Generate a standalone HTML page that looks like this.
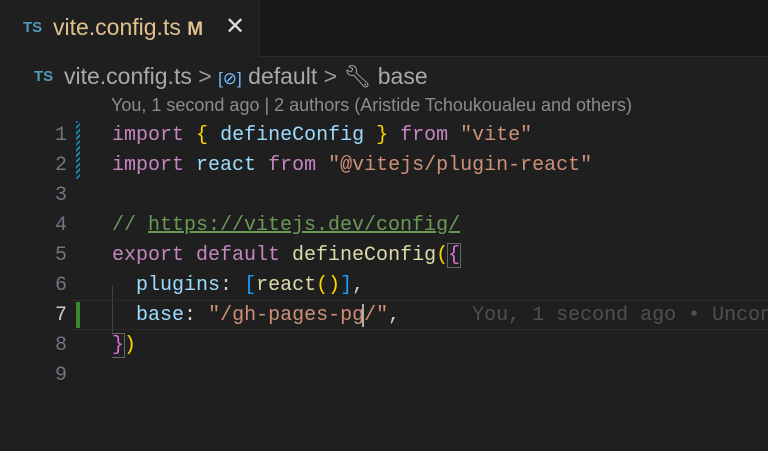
<!DOCTYPE html>
<html><head><meta charset="utf-8"><style>
body{margin:0;width:768px;height:451px;background:#1f1f1f;overflow:hidden;font-family:"Liberation Sans",sans-serif;position:relative}
.tabbar{position:absolute;left:0;top:0;width:768px;height:56px;background:#181818;border-bottom:1px solid #2b2b2b}
.tab{position:absolute;left:0;top:0;width:259px;height:57px;background:#1f1f1f;border-right:1px solid #2b2b2b}
.abs{position:absolute;white-space:pre}
.ts{color:#519aba;font-weight:bold;font-size:15px}
.code{font-family:"Liberation Mono",monospace;font-size:20px;line-height:30px}
.ln{position:absolute;left:30px;width:37px;text-align:right;color:#6e7681;font-family:"Liberation Mono",monospace;font-size:20px;line-height:30px}
.k{color:#c586c0}.v{color:#9cdcfe}.y{color:#ffd700}.s{color:#ce9178}.c{color:#6a9955}.f{color:#dcdcaa}.b{color:#179fff}.w{color:#cccccc}.p{color:#da70d6}
</style></head><body>
<div class="tabbar"></div>
<div class="tab"></div>
<div class="abs ts" style="left:23px;top:19px">TS</div>
<div class="abs" style="left:53px;top:14px;font-size:23px;color:#e2c08d">vite.config.ts <span style="font-weight:bold;font-size:19px">M</span></div>
<div class="abs" style="left:225px;top:12px;font-size:24px;color:#ddd">✕</div>

<div class="abs ts" style="left:34px;top:68px">TS</div>
<div class="abs" style="left:64px;top:63px;font-size:23px;color:#a9a9a9">vite.config.ts <span style="color:#999">&gt;</span> <span style="color:#75beff;font-size:17px">[⊘]</span> default <span style="color:#999">&gt;</span> <span style="font-size:22px">🔧︎</span> base</div>
<div class="abs" style="left:111px;top:95px;font-size:18px;color:#8c8c8c">You, 1 second ago | 2 authors (Aristide Tchoukoualeu and others)</div>

<div class="abs" style="left:76px;top:121px;width:4px;height:58px;background:repeating-linear-gradient(135deg,#1b81a8 0 2px,transparent 2px 4px)"></div>
<div class="abs" style="left:76px;top:302px;width:4px;height:26px;background:#388a34"></div>
<div class="abs" style="left:68px;top:300px;width:700px;height:28px;border-top:1px solid #2a2a2a;border-bottom:1px solid #2a2a2a"></div>
<div class="abs" style="left:112px;top:285px;width:1px;height:50px;background:#404040"></div>

<div class="ln" style="top:121px">1<br>2<br>3<br>4<br>5<br>6<br><span style="color:#ccc">7</span><br>8<br>9</div>
<div class="abs code" style="left:112px;top:121px;width:656px;overflow:hidden"><span class="k">import</span> <span class="y">{</span> <span class="v">defineConfig</span> <span class="y">}</span> <span class="k">from</span> <span class="s">"vite"</span>
<span class="k">import</span> <span class="v">react</span> <span class="k">from</span> <span class="s">"@vitejs/plugin-react"</span>

<span class="c">// <u>https://vitejs.dev/config/</u></span>
<span class="k">export default</span> <span class="f">defineConfig</span><span class="y">(</span><span class="p" style="outline:1px solid #666">{</span>
  <span class="v">plugins</span><span class="w">:</span> <span class="b">[</span><span class="f">react</span><span class="p" style="color:#ffd700">()</span><span class="b">]</span><span class="w">,</span>
  <span class="v">base</span><span class="w">:</span> <span class="s">"/gh-pages-pg<span style="border-left:2px solid #aeafad;margin-left:-2px"></span>/"</span><span class="w">,</span>      <span style="color:#4f4f4f">You, 1 second ago • Uncon</span>
<span class="p" style="outline:1px solid #666">}</span><span class="y">)</span>
</div>
</body></html>
